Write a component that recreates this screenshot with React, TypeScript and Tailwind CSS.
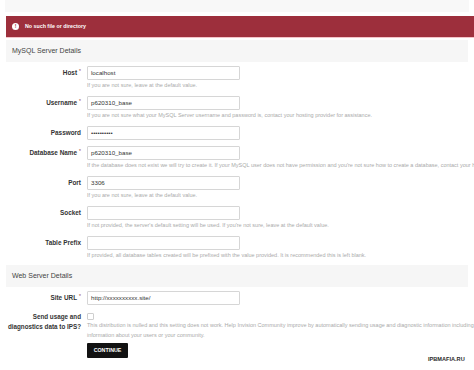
import React from "react";

interface FieldProps {
    label: string;
    required?: boolean;
    value?: string;
    helper?: string;
}

function Field({ label, required, value, helper }: FieldProps) {
    return (
        <div className="flex">
            <div className="w-[75px] h-[14px] flex items-center justify-end shrink-0 text-[6.4px] font-bold text-[#333] whitespace-nowrap">
                {label}
                {required && (
                    <span className="ml-[2px] -mt-[3px] text-[5px] font-normal text-[#9a3b3b]">*</span>
                )}
            </div>
            <div className="ml-[6px] flex flex-col">
                <div className="w-[153px] h-[14px] border border-[#d6d6d6] rounded-[1px] bg-white flex items-center px-[3px] text-[6.2px] text-[#333] whitespace-nowrap">
                    {value}
                </div>
                {helper && (
                    <div className="mt-[1px] leading-[9px] text-[5.5px] text-[#aaaaaa] whitespace-nowrap">
                        {helper}
                    </div>
                )}
            </div>
        </div>
    );
}

function SectionHeader({ title }: { title: string }) {
    return (
        <div className="h-[22px] w-[462px] bg-[#f6f6f6] flex items-center pl-[6px] text-[7px] text-[#444]">
            {title}
        </div>
    );
}

export default function App() {
    return (
        <div className="relative w-[474px] h-[370px] overflow-hidden bg-white pl-[6px] font-['Liberation_Sans',Arial,sans-serif]">
            {/* top strip */}
            <div className="h-[12px] w-[464px] -ml-[1px] bg-[#f8f8f8]" />

            {/* error banner */}
            <div className="mt-[4px] h-[22px] bg-[#9d2f3c] border-b border-[#f4c4c9] flex items-center pl-[6px] gap-[6px]">
                <div className="w-[7px] h-[7px] rounded-full bg-white flex items-center justify-center text-[5px] font-bold leading-none text-[#9d2f3c]">
                    !
                </div>
                <span className="text-[5.3px] font-bold text-white">No such file or directory</span>
            </div>

            <div className="mt-[2px]">
                <SectionHeader title="MySQL Server Details" />
            </div>

            <div className="mt-[4px] flex flex-col gap-[6px]">
                <Field
                    label="Host"
                    required
                    value="localhost"
                    helper="If you are not sure, leave at the default value."
                />
                <Field
                    label="Username"
                    required
                    value="p620310_base"
                    helper="If you are not sure what your MySQL Server username and password is, contact your hosting provider for assistance."
                />
                <Field label="Password" value="••••••••••" />
                <Field
                    label="Database Name"
                    required
                    value="p620310_base"
                    helper="If the database does not exist we will try to create it. If your MySQL user does not have permission and you're not sure how to create a database, contact your hosting provider for assistance."
                />
                <Field label="Port" value="3306" helper="If you are not sure, leave at the default value." />
                <Field
                    label="Socket"
                    helper="If not provided, the server's default setting will be used. If you're not sure, leave at the default value."
                />
                <Field
                    label="Table Prefix"
                    helper="If provided, all database tables created will be prefixed with the value provided. It is recommended this is left blank."
                />
            </div>

            <div className="mt-[5px]">
                <SectionHeader title="Web Server Details" />
            </div>

            <div className="mt-[4px]">
                <Field label="Site URL" required value="http://xxxxxxxxxx.site/" />
            </div>

            <div className="mt-[7px] flex">
                <div className="w-[75px] shrink-0 text-right text-[6.3px] font-bold leading-[10px] text-[#333] whitespace-nowrap">
                    Send usage and
                    <br />
                    diagnostics data to IPS?
                </div>
                <div className="ml-[6px] flex flex-col">
                    <div className="mt-[1px] w-[7px] h-[7px] border border-[#cfcfcf] rounded-[1px] bg-white" />
                    <div className="leading-[10px] text-[5.5px] text-[#aaaaaa] whitespace-nowrap">
                        This distribution is nulled and this setting does not work. Help Invision Community improve by automatically sending usage and diagnostic information including a list of installed applications and plugins but not
                        <br />
                        information about your users or your community.
                    </div>
                </div>
            </div>

            <button className="mt-[3px] ml-[81px] w-[41px] h-[15px] bg-[#121212] rounded-[1px] flex items-center justify-center text-[5.3px] font-bold text-white">
                CONTINUE
            </button>

            <div className="absolute left-[428px] top-[355px] text-[5.6px] font-bold text-[#2a2a2a]">
                IPBMAFIA.RU
            </div>
        </div>
    );
}
